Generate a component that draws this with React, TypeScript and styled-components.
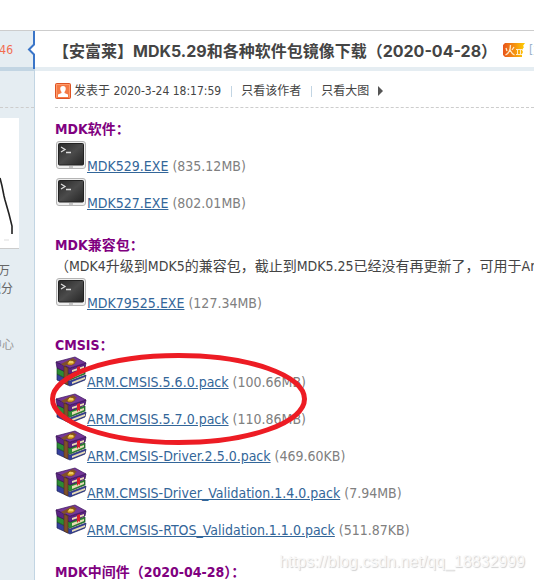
import React from 'react';
import styled, { createGlobalStyle } from 'styled-components';

const GlobalStyle = createGlobalStyle`
  * { box-sizing: border-box; }
  body {
    margin: 0;
    background: #fff;
    color: #444;
    font: 14px/21px "DejaVu Sans Condensed", "Noto Sans CJK SC", sans-serif;
  }
`;

const Page = styled.div`
  position: relative;
  height: 100vh;
  padding-top: 30px;
  overflow: hidden;
`;

const Thread = styled.div`
  display: grid;
  grid-template-columns: 35px minmax(0, 1fr);
  min-height: 100%;
  border-top: 1px solid #cdcdcd;
`;

const Sidebar = styled.aside`
  display: flex;
  flex-direction: column;
  background: #e5edf2;
  border-right: 1px solid #c2d5e3;
  white-space: nowrap;
`;

const Replies = styled.div`
  position: relative;
  display: flex;
  align-items: center;
  justify-content: flex-end;
  height: 40px;
  padding: 2px 21px 0 0;
  flex: none;
  border-bottom: 4px solid #c2d5e3;
  color: #f26c4f;
  font-size: 12px;
`;

const Marker = styled.svg`
  position: absolute;
  top: 0;
  right: -1px;
`;

const Rule = styled.div`
  height: 37px;
  flex: none;
  border-bottom: 1px dashed #cdcdcd;
`;

const Avatar = styled.div`
  display: flex;
  justify-content: flex-end;
  flex: none;
  width: 19px;
  height: 131px;
  margin: 10px 0 13px;
  background: #fff;
  border-bottom: 1px solid #ccc;
`;

const SideText = styled.div<{ $end: number; $muted?: boolean }>`
  display: flex;
  justify-content: flex-end;
  flex: none;
  width: ${(p) => p.$end}px;
  line-height: 18px;
  font-size: 12px;
  color: ${(p) => (p.$muted ? '#999' : '#666')};
  margin-top: ${(p) => (p.$muted ? 38 : 0)}px;
`;

const Post = styled.main`
  overflow: hidden;
  white-space: nowrap;
`;

const TitleBar = styled.header`
  display: flex;
  align-items: center;
  height: 40px;
  padding: 3px 0 0 18px;
  border-bottom: 4px solid #e5edf2;
`;

const Title = styled.h1`
  margin: 0 6px 0 0;
  font: bold 16px/24px Inter, "Noto Sans CJK SC", sans-serif;
  color: #444;
`;

const CopyLink = styled.a`
  margin-left: 4px;
  font-size: 12px;
  color: #9bb3cc;
  text-decoration: none;
`;

const Meta = styled.div`
  display: flex;
  align-items: center;
  height: 37px;
  margin-left: 20px;
  padding-top: 4px;
  border-bottom: 1px dashed #cdcdcd;
  font-size: 12px;

  a { color: #444; text-decoration: none; }
  time { margin-left: 3px; }
  svg { flex: none; }
`;

const Divider = styled.span`
  width: 1px;
  height: 11px;
  margin: 0 9px 0 10px;
  background: #c2d5e3;
`;

const Body = styled.article`
  padding: 11px 0 0 20px;
`;

const Section = styled.section`
  margin-bottom: 21px;
`;

const Heading = styled.h2`
  margin: 0;
  font-size: 14px;
  line-height: 21px;
  color: #800080;
`;

const Note = styled.p`
  margin: 0;
`;

const FileRow = styled.div`
  display: flex;
  align-items: flex-end;
  height: 37px;
  color: #808080;

  svg { align-self: flex-start; flex: none; }
`;

const FileLink = styled.a`
  margin-right: 4px;
  color: #369;
  text-decoration: underline;
`;

const Circle = styled.svg`
  position: absolute;
  left: 50px;
  top: 353px;
  pointer-events: none;
`;

const Watermark = styled.div`
  position: absolute;
  right: 9px;
  bottom: 8px;
  font: 16px/20px "Liberation Sans", sans-serif;
  color: #f8f8f8;
  text-shadow: 1px 1px 1px #d0d0d0;
`;

const TerminalIcon = () => (
  <svg width="32" height="32" viewBox="0 0 32 32" aria-hidden="true">
    <defs>
      <linearGradient id="screen" x1="0" y1="0" x2="1" y2="1">
        <stop offset="0" stopColor="#292929" />
        <stop offset="0.5" stopColor="#4b4b4b" />
        <stop offset="1" stopColor="#252525" />
      </linearGradient>
    </defs>
    <rect x="1.5" y="1.5" width="29" height="27" rx="2.5" fill="#eee" stroke="#b4b4b4" />
    <rect x="3.5" y="3.5" width="25" height="21.5" rx="1" fill="url(#screen)" stroke="#222" />
    <path d="M6 7l4 2.500L6 12M11 12.500h5" fill="none" stroke="#ddd" strokeWidth="1.3" />
    <path d="M14 27h4" stroke="#999" />
  </svg>
);

const ArchiveIcon = () => (
  <svg width="32" height="32" viewBox="0 0 32 32" aria-hidden="true">
    <path d="M2 18l13 7 16-6-1 5-15 6L2 24z" fill="#343f9c" stroke="#1c2258" strokeWidth=".7" />
    <path d="M17 26l13-5v2l-13 5z" fill="#e8dcb4" />
    <path d="M2 12l13 6 15-5v5l-15 6L2 18z" fill="#2b8b35" stroke="#134a1a" strokeWidth=".7" />
    <path d="M17 19l12-4v2l-12 5z" fill="#e8dcb4" />
    <path d="M1 6l14 6 16-5-1 5-15 6L2 12z" fill="#5a2383" stroke="#32104d" strokeWidth=".7" />
    <path d="M17 14l12-4v2l-12 4z" fill="#e8dcb4" />
    <path d="M1 6L20 1l11 6-16 5z" fill="#743798" stroke="#3c135c" strokeWidth=".7" />
    <path d="M9 10l4 2v17l-4-2z" fill="#80502a" stroke="#523014" strokeWidth=".6" />
    <path d="M9 10L22 5l-4-3L6 8z" fill="#80502a" />
    <path d="M12 7l3-3 4 1 1 2-3 2h-4z" fill="#d9a42a" stroke="#7c4a0d" strokeWidth=".7" />
    <path d="M14 6h4" stroke="#fff1a0" />
    <path d="M22 11l3-1v8l-1.500-1-1.500 2z" fill="#d81e2c" />
  </svg>
);

const UserIcon = () => (
  <svg width="16" height="16" viewBox="0 0 16 16" aria-hidden="true">
    <rect x=".5" y=".5" width="15" height="15" rx="1" fill="#f47a45" stroke="#dd5324" />
    <path d="M1.500 14.500v-13h13v13" fill="none" stroke="#ff9c6c" />
    <path d="M8 3C5.800 3 5 4.500 5.300 6.500c.2 1.200.8 2 1.200 2.600v1L3 11.500V14h10v-2.500l-3.500-1.400v-1c.4-.6 1-1.400 1.200-2.600C11 4.500 10.200 3 8 3z" fill="#fff" />
  </svg>
);

const BadgeSvg = styled.svg`
  flex: none;
`;

const FireBadge = () => (
  <BadgeSvg width="22" height="15" viewBox="0 0 22 15" aria-label="热度 II" role="img">
    <defs>
      <linearGradient id="fire" x1="0" y1="0" x2="1" y2="0">
        <stop offset="0" stopColor="#e8541c" />
        <stop offset=".55" stopColor="#f5940f" />
        <stop offset="1" stopColor="#ffcf00" />
      </linearGradient>
    </defs>
    <path d="M2 0h20l-2 3 1 1-2 3 1 2-1 2v3H2l-2-2V2z" fill="url(#fire)" />
    <path d="M7.500 2c0 5-1 8-5 10M7 7c1 2 2 4 4.500 5M3 5l1 3M11 4L9 7" stroke="#ffe9c8" strokeWidth="1.3" fill="none" />
    <path d="M13 6.500h6M13 11.500h6M14.500 7v5M17.500 7v5" stroke="#ffe9c8" fill="none" />
  </BadgeSvg>
);

const FileItem = ({ name, size, archive }: { name: string; size: string; archive?: boolean }) => (
  <FileRow>
    {archive ? <ArchiveIcon /> : <TerminalIcon />}
    <FileLink href="#">{name}</FileLink>
    <span>({size})</span>
  </FileRow>
);

const packs = [
  ['ARM.CMSIS.5.6.0.pack', '100.66MB'],
  ['ARM.CMSIS.5.7.0.pack', '110.86MB'],
  ['ARM.CMSIS-Driver.2.5.0.pack', '469.60KB'],
  ['ARM.CMSIS-Driver_Validation.1.4.0.pack', '7.94MB'],
  ['ARM.CMSIS-RTOS_Validation.1.1.0.pack', '511.87KB'],
];

export default function App() {
  return (
    <Page>
      <GlobalStyle />
      <Thread>
        <Sidebar>
          <Replies>
            46
            <Marker width="8" height="38" viewBox="0 0 8 38" aria-hidden="true">
              <path d="M8 13v11L2 18.500z" fill="#fff" />
              <path d="M7 0v13.500L2 18.500 7 23.500V38" fill="none" stroke="#3a75c8" strokeWidth="2" />
            </Marker>
          </Replies>
          <Rule />
          <Avatar>
            <svg width="19" height="130" viewBox="0 0 19 130" aria-hidden="true">
              <path d="M0 60l2 8 2 10 1 4 4 14 3 12v8" fill="none" stroke="#222" strokeWidth="1.600" />
              <path d="M4 122h5" stroke="#ddd" />
            </svg>
          </Avatar>
          <SideText $end={10}>万</SideText>
          <SideText $end={13}>积分</SideText>
          <SideText $end={14} $muted>中心</SideText>
        </Sidebar>
        <Post>
          <TitleBar>
            <Title>【安富莱】MDK5.29和各种软件包镜像下载（2020-04-28）</Title>
            <FireBadge />
            <CopyLink href="#">[复制链接]</CopyLink>
          </TitleBar>
          <Meta>
            <UserIcon />
            <time>发表于 2020-3-24 18:17:59</time>
            <Divider />
            <a href="#">只看该作者</a>
            <Divider />
            <a href="#">只看大图</a>
            <svg width="22" height="12" viewBox="0 0 22 12" aria-hidden="true">
              <path d="M9 1l5 5-5 5z" fill="#555" />
            </svg>
          </Meta>
          <Body>
            <Section>
              <Heading>MDK软件：</Heading>
              <FileItem name="MDK529.EXE" size="835.12MB" />
              <FileItem name="MDK527.EXE" size="802.01MB" />
            </Section>
            <Section>
              <Heading>MDK兼容包：</Heading>
              <Note>（MDK4升级到MDK5的兼容包，截止到MDK5.25已经没有再更新了，可用于Arm7，Arm9）</Note>
              <FileItem name="MDK79525.EXE" size="127.34MB" />
            </Section>
            <Section>
              <Heading>CMSIS：</Heading>
              {packs.map(([name, size]) => (
                <FileItem key={name} name={name} size={size} archive />
              ))}
            </Section>
            <Section>
              <Heading>MDK中间件（2020-04-28）：</Heading>
            </Section>
          </Body>
        </Post>
      </Thread>
      <Circle width="257" height="92" viewBox="0 0 257 92" aria-hidden="true">
        <ellipse cx="128.5" cy="46" rx="126" ry="43.5" fill="none" stroke="#ed1c24" strokeWidth="5" />
      </Circle>
      <Watermark>https://blog.csdn.net/qq_18832999</Watermark>
    </Page>
  );
}
